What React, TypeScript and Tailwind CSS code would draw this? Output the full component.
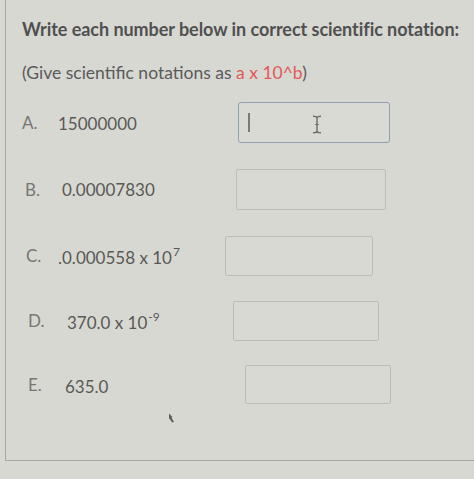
import React from 'react';

type Row = {
  label: string;
  value: React.ReactNode;
  rowClass: string;
  labelClass: string;
  valueClass: string;
  boxClass: string;
  focused?: boolean;
};

const Sup: React.FC<{ children: React.ReactNode }> = ({ children }) => (
  <span className="inline-block align-top text-[12px] leading-[12px] -mt-[2px] ml-[1px]">{children}</span>
);

const rows: Row[] = [
  {
    label: 'A.',
    value: '15000000',
    rowClass: 'mt-[18px] pl-[16px]',
    labelClass: 'w-[36px]',
    valueClass: 'w-[180px] pt-[3px]',
    boxClass: 'w-[152px] h-[41px]',
    focused: true,
  },
  {
    label: 'B.',
    value: '0.00007830',
    rowClass: 'mt-[26px] pl-[19px]',
    labelClass: 'w-[37px]',
    valueClass: 'w-[174px] pt-[1px]',
    boxClass: 'w-[150px] h-[41px]',
  },
  {
    label: 'C.',
    value: (
      <>
        .0.000558 x 10<Sup>7</Sup>
      </>
    ),
    rowClass: 'mt-[26px] pl-[20px]',
    labelClass: 'w-[32px]',
    valueClass: 'w-[167px] pt-[3px]',
    boxClass: 'w-[148px] h-[40px]',
  },
  {
    label: 'D.',
    value: (
      <>
        370.0 x 10<Sup>-9</Sup>
      </>
    ),
    rowClass: 'mt-[25px] pl-[22px]',
    labelClass: 'w-[39px]',
    valueClass: 'w-[166px] pt-[3px]',
    boxClass: 'w-[146px] h-[40px]',
  },
  {
    label: 'E.',
    value: '635.0',
    rowClass: 'mt-[24px] pl-[22px]',
    labelClass: 'w-[37px]',
    valueClass: 'w-[180px] pt-[4px]',
    boxClass: 'w-[146px] h-[39px]',
  },
];

const IBeam: React.FC = () => (
  <svg width="10" height="19" viewBox="0 0 10 19" fill="none" stroke="#6b6b6b" strokeWidth="1.4">
    <path d="M1 1.2 C3 1.2 5 1.5 5 3 C5 1.5 7 1.2 9 1.2" />
    <path d="M5 3 V16" />
    <path d="M1 17.8 C3 17.8 5 17.5 5 16 C5 17.5 7 17.8 9 17.8" />
    <path d="M3.2 9.5 H6.8" strokeWidth="1" />
  </svg>
);

const App: React.FC = () => {
  return (
    <div
      className="relative w-[474px] h-[479px] overflow-hidden bg-[#d8d8d2]"
      style={{ fontFamily: 'Lato, "Open Sans", sans-serif' }}
    >
      <div className="ml-[5px] h-[461px] border-l border-b border-[#a8a8a2]">
        <h1 className="pt-[18px] pl-[16px] text-[18px] leading-[22px] font-bold text-[#505050] whitespace-nowrap tracking-[-0.05px]">
          Write each number below in correct scientific notation:
        </h1>
        <p className="mt-[22px] pl-[16px] text-[17.5px] leading-[22px] text-[#5a5a5a] whitespace-nowrap">
          (Give scientific notations as <span className="text-[#e05a5a]">a x 10^b</span>)
        </p>

        {rows.map((r) => (
          <div key={r.label} className={`flex items-center ${r.rowClass}`}>
            <span className={`text-[17px] leading-[20px] text-[#777773] ${r.labelClass}`}>{r.label}</span>
            <span className={`text-[17px] leading-[20px] text-[#585856] whitespace-nowrap ${r.valueClass}`}>
              {r.value}
            </span>
            {r.focused ? (
              <div
                className={`relative shrink-0 rounded-[3px] border-[1.5px] border-[#8e9fb6] bg-[#dadad5] ${r.boxClass}`}
              >
                <div className="absolute left-[9px] top-[10px] w-[1.5px] h-[19px] bg-[#7a7a7a]" />
                <div className="absolute left-[73px] top-[12px]">
                  <IBeam />
                </div>
              </div>
            ) : (
              <div className={`shrink-0 rounded-[2px] border border-[#bdbdb7] bg-[#d9d9d4] ${r.boxClass}`} />
            )}
          </div>
        ))}
      </div>

      <svg className="absolute left-[168px] top-[413px]" width="7" height="10" viewBox="0 0 7 10">
        <path d="M1 0.5 L4.5 4 L3.5 4.5 L6 9 L4 9.5 L1.5 5.5 L1 6.5 Z" fill="#5e5e5e" />
      </svg>
    </div>
  );
};

export default App;
